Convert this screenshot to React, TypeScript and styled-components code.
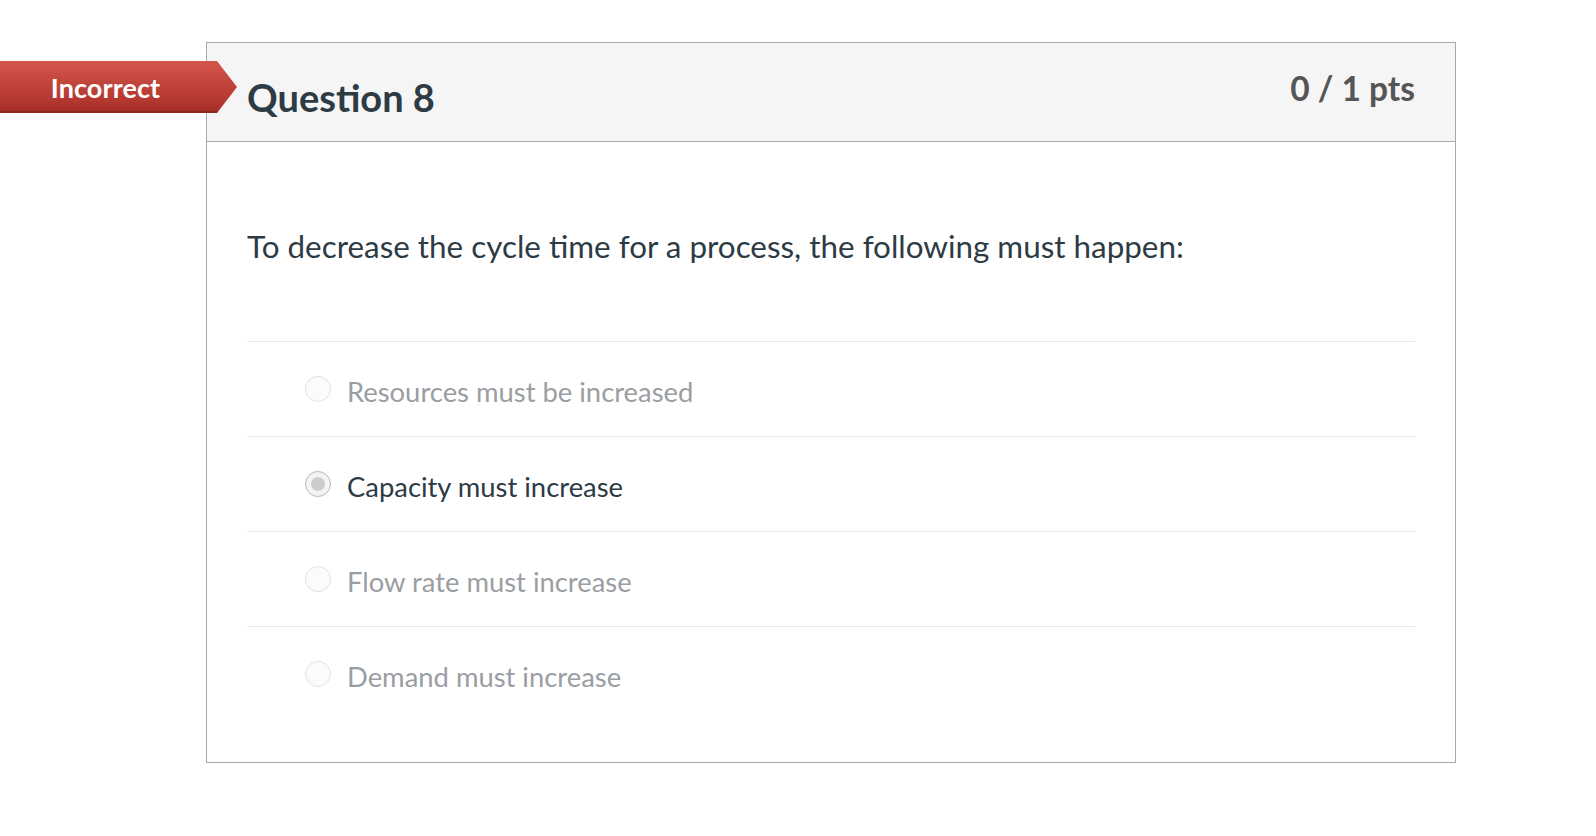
import React from "react";
import styled, { createGlobalStyle } from "styled-components";

const Global = createGlobalStyle`
  html, body { margin: 0; padding: 0; background: #ffffff; }
  body { font-family: Lato, "Open Sans", "Liberation Sans", sans-serif; color: #2d3b45; }
`;

const Page = styled.div`
  padding: 42px 0 0 206px;
`;

const Card = styled.section`
  position: relative;
  width: 1248px;
  border: 1px solid #a9a9a9;
  background: #ffffff;
`;

const Ribbon = styled.div`
  position: absolute;
  left: -207px;
  top: 18px;
  width: 237px;
  height: 52px;
  clip-path: polygon(0 0, 217px 0, 237px 26px, 217px 52px, 0 52px);
  background: linear-gradient(#d4564b, #b63a32 70%, #a42d26);
  box-shadow: inset 0 -2px 0 rgba(0, 0, 0, 0.15);
  display: flex;
  align-items: center;
  justify-content: center;
  padding-right: 26px;
  box-sizing: border-box;
  color: #ffffff;
  font-size: 27px;
  font-weight: 700;
  letter-spacing: 0.1px;
`;

const Header = styled.header`
  height: 98px;
  background: #f5f5f5;
  border-bottom: 1px solid #a9a9a9;
  display: flex;
  justify-content: space-between;
  align-items: flex-start;
  padding: 0 40px;
`;

const Title = styled.h2`
  margin: 31px 0 0;
  font-size: 38px;
  line-height: 46px;
  font-weight: 700;
  color: #2d3b45;
`;

const Points = styled.div`
  margin-top: 25px;
  font-size: 33.5px;
  line-height: 40px;
  font-weight: 700;
  color: #555555;
`;

const Body = styled.div`
  padding: 84px 40px 41px;
`;

const Prompt = styled.p`
  margin: 0 0 75px;
  font-size: 31.4px;
  line-height: 40px;
  color: #2d3b45;
`;

const Answers = styled.ul`
  list-style: none;
  margin: 0;
  padding: 0;
`;

const Answer = styled.li`
  height: 94px;
  border-top: 1px solid #e6e6e6;
  display: flex;
  align-items: center;
  padding-left: 58px;
  gap: 16px;
`;

const Radio = styled.span<{ $checked?: boolean }>`
  width: 24px;
  height: 24px;
  border-radius: 50%;
  border: 1px solid ${(p) => (p.$checked ? "#b8b8b8" : "#e2e2e2")};
  background: ${(p) => (p.$checked ? "#f4f4f4" : "#fbfbfb")};
  display: flex;
  align-items: center;
  justify-content: center;
  flex: none;
  &::after {
    content: "";
    display: ${(p) => (p.$checked ? "block" : "none")};
    width: 14px;
    height: 14px;
    border-radius: 50%;
    background: #cccccc;
  }
`;

const AnswerText = styled.span<{ $checked?: boolean }>`
  font-size: 27.4px;
  line-height: 34px;
  color: ${(p) => (p.$checked ? "#2d3b45" : "#9a9ea3")};
  margin-top: 5px;
`;

const answers = [
  { text: "Resources must be increased", checked: false },
  { text: "Capacity must increase", checked: true },
  { text: "Flow rate must increase", checked: false },
  { text: "Demand must increase", checked: false },
];

export default function App() {
  return (
    <>
      <Global />
      <Page>
        <Card>
          <Ribbon>Incorrect</Ribbon>
          <Header>
            <Title>Question 8</Title>
            <Points>0 / 1 pts</Points>
          </Header>
          <Body>
            <Prompt>To decrease the cycle time for a process, the following must happen:</Prompt>
            <Answers>
              {answers.map((a) => (
                <Answer key={a.text}>
                  <Radio $checked={a.checked} />
                  <AnswerText $checked={a.checked}>{a.text}</AnswerText>
                </Answer>
              ))}
            </Answers>
          </Body>
        </Card>
      </Page>
    </>
  );
}
